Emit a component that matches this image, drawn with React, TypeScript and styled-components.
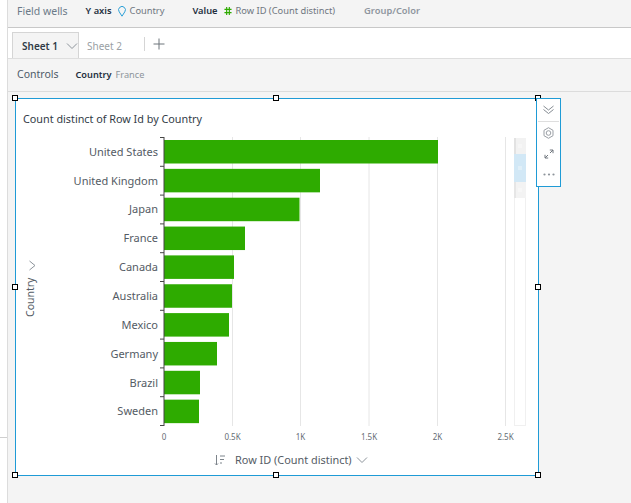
import styled, { createGlobalStyle } from "styled-components";

const Global = createGlobalStyle`
  html, body { margin: 0; padding: 0; background: #fff; }
  * { box-sizing: border-box; }
  body { font-family: "Noto Sans", "Open Sans", sans-serif; }
`;

const Page = styled.div`
  width: 631px;
  height: 503px;
  display: flex;
  overflow: hidden;
`;

const Gutter = styled.div`
  width: 8px;
  flex: none;
  border-right: 1px solid #dcdcdc;
`;

const GutterNotch = styled.div`
  height: 1px;
  margin-top: 437px;
  background: #cfcfcf;
`;

const Main = styled.div`
  flex: 1;
  min-width: 0;
  display: flex;
  flex-direction: column;
`;

const Wells = styled.div`
  height: 28px;
  flex: none;
  display: flex;
  align-items: flex-start;
  padding: 4px 0 0 9px;
  background: #f4f4f4;
  border-bottom: 1px solid #c8c8c8;
  font-size: 9.3px;
  line-height: 14px;
`;

const WellsTitle = styled.span`
  font-size: 10.5px;
  color: #6b7a88;
  margin-right: 18px;
`;

const WellLabel = styled.span`
  font-weight: 600;
  color: #232f3e;
  margin-right: 6px;
`;

const WellValue = styled.span<{ $after: number }>`
  display: inline-flex;
  align-items: center;
  gap: 4px;
  color: #6f7680;
  margin-right: ${({ $after }) => $after}px;
`;

const WellEmpty = styled.span`
  font-weight: 600;
  color: #8f969e;
`;

const Tabs = styled.div`
  height: 31px;
  flex: none;
  display: flex;
  align-items: flex-end;
  padding-left: 4px;
  background: #fff;
  border-bottom: 1px solid #dedede;
`;

const ActiveTab = styled.div`
  width: 67px;
  height: 26px;
  display: flex;
  align-items: center;
  justify-content: space-between;
  padding: 1px 0 0 9px;
  background: #f4f4f4;
  border: 1px solid #d5d5d5;
  border-bottom: none;
  font-size: 10px;
  font-weight: 600;
  color: #2f3a46;
`;

const Tab = styled.div`
  height: 26px;
  display: flex;
  align-items: center;
  padding: 1px 0 0 8px;
  width: 65px;
  font-size: 10px;
  color: #9a9fa5;
`;

const AddTab = styled.div`
  height: 14px;
  margin-bottom: 7px;
  padding-left: 8px;
  display: flex;
  align-items: center;
  border-left: 1px solid #d5d5d5;
`;

const Controls = styled.div`
  height: 33px;
  flex: none;
  display: flex;
  align-items: center;
  padding: 0 0 2px 9px;
  background: #f4f4f4;
  border-bottom: 1px solid #dcdcdc;
`;

const ControlsTitle = styled.span`
  font-size: 10.5px;
  color: #4d5a68;
  margin-right: 17px;
`;

const ControlName = styled.span`
  font-size: 9.2px;
  font-weight: 600;
  color: #232f3e;
  margin-right: 4px;
`;

const ControlValue = styled.span`
  font-size: 9.2px;
  color: #8d949b;
`;

const Canvas = styled.div`
  flex: 1;
  min-height: 0;
  background: #f4f4f4;
  padding: 6px 0 0 7px;
`;

const Visual = styled.div`
  position: relative;
  width: 524px;
  height: 378px;
  background: #fff;
  border: 1px solid #1f9bd6;
`;

const VisualTitle = styled.div`
  height: 31px;
  padding: 12px 0 0 7px;
  font-size: 10.8px;
  line-height: 15px;
  color: #333c47;
`;

const ChartSvg = styled.svg`
  display: block;
`;

const Handle = styled.span<{ $x: string; $y: string }>`
  position: absolute;
  left: ${({ $x }) => $x};
  top: ${({ $y }) => $y};
  width: 6px;
  height: 6px;
  margin: -3px 0 0 -3px;
  background: #fff;
  border: 1.5px solid #000;
`;

const VisualMenu = styled.div`
  position: absolute;
  left: 520px;
  top: -1px;
  width: 25px;
  height: 89px;
  display: flex;
  flex-direction: column;
  align-items: center;
  background: #fff;
  border: 1px solid #1f9bd6;
`;

const MenuCollapse = styled.div`
  width: 21px;
  height: 23px;
  flex: none;
  display: flex;
  align-items: center;
  justify-content: center;
  border-bottom: 1px solid #dedede;
`;

const MenuItem = styled.div`
  height: 21px;
  flex: none;
  display: flex;
  align-items: center;
  justify-content: center;
`;

const rows = [
  { name: "United States", end: 438 },
  { name: "United Kingdom", end: 320 },
  { name: "Japan", end: 299.5 },
  { name: "France", end: 245 },
  { name: "Canada", end: 234 },
  { name: "Australia", end: 232 },
  { name: "Mexico", end: 229 },
  { name: "Germany", end: 217 },
  { name: "Brazil", end: 200 },
  { name: "Sweden", end: 199 },
];

const ticks = [
  { label: "0", x: 164 },
  { label: "0.5K", x: 232.5 },
  { label: "1K", x: 300.5 },
  { label: "1.5K", x: 369 },
  { label: "2K", x: 437.5 },
  { label: "2.5K", x: 505.5 },
];

const STEP = 28.85;

const Chevron = ({ size = 12 }: { size?: number }) => (
  <svg width={size} height={size} viewBox="0 0 12 12" fill="none" stroke="#8d949b" strokeWidth="1">
    <path d="M1 3.5 6 8.5 11 3.5" />
  </svg>
);

const Chart = () => (
  <ChartSvg width={522} height={345} viewBox="16 130 522 345" fontFamily="'Noto Sans', 'Open Sans', sans-serif">
    {ticks.slice(1).map((t) => (
      <line key={t.label} x1={t.x} x2={t.x} y1={137} y2={426} stroke="#e6e6e6" strokeWidth="1" />
    ))}
    {rows.map((r, i) => (
      <g key={r.name}>
        <rect x={164} y={140 + i * STEP} width={r.end - 164} height={23.5} fill="#2eab00" />
        <text x={158} y={155.7 + i * STEP} textAnchor="end" fontSize="11" fill="#545b64">
          {r.name}
        </text>
      </g>
    ))}
    {rows.concat(rows[0]).map((r, i) => (
      <line key={i} x1={160} x2={164} y1={137.5 + i * 28.8} y2={137.5 + i * 28.8} stroke="#444" strokeWidth="1" />
    ))}
    <line x1={164} x2={164} y1={137} y2={426} stroke="#444" strokeWidth="1" />
    {ticks.map((t) => (
      <text key={t.label} x={t.x} y={440} textAnchor="middle" fontSize="8" fill="#666d75">
        {t.label}
      </text>
    ))}

    <rect x={514.5} y={138.5} width={11} height={287} fill="none" stroke="#f0f0f0" />
    <rect x={514} y={138} width={12} height={16} fill="#f2f2f2" />
    <rect x={514} y={138} width={2} height={16} fill="#e2e2e2" />
    <rect x={514} y={154} width={12} height={28} fill="#d2e8f6" />
    <rect x={514} y={182} width={12} height={16} fill="#f3f3f3" />
    <rect x={514} y={182} width={2} height={16} fill="#e6e6e6" />
    {[146, 168, 190].map((y) => (
      <path key={y} d={`M518 ${y - 1}h4M518 ${y + 1}h4`} stroke="#fff" strokeWidth="0.8" opacity="0.8" />
    ))}

    <text transform="translate(34 317) rotate(-90)" fontSize="10.5" fill="#545b64">
      Country
    </text>
    <path d="M29.5 261 35 265.5 29.5 270" fill="none" stroke="#8d949b" />

    <path d="M216.5 455v10M215 463.5l1.500 1.500 1.500-1.500M220 456h5M220 459.500h4M220 463h2" fill="none" stroke="#7d848b" strokeWidth="1" />
    <text x={235} y={464} fontSize="10.9" fill="#545b64">
      Row ID (Count distinct)
    </text>
    <path d="M357 457.500 362 462.500 367 457.500" fill="none" stroke="#8d949b" />
  </ChartSvg>
);

const handles = [
  ["-1px", "-1px"],
  ["260px", "-1px"],
  ["522px", "-1px"],
  ["-1px", "188px"],
  ["522px", "188px"],
  ["-1px", "376px"],
  ["260px", "376px"],
  ["522px", "376px"],
];

export default function App() {
  return (
    <Page>
      <Global />
      <Gutter>
        <GutterNotch />
      </Gutter>
      <Main>
        <Wells>
          <WellsTitle>Field wells</WellsTitle>
          <WellLabel>Y axis</WellLabel>
          <WellValue $after={28}>
            <svg width="8" height="11" viewBox="0 0 8 11" fill="none" stroke="#2a9fd6" strokeWidth="1">
              <path d="M4 10.200 1.200 5.800A3.400 3.400 0 1 1 6.800 5.800Z" />
            </svg>
            Country
          </WellValue>
          <WellLabel>Value</WellLabel>
          <WellValue $after={29}>
            <svg width="8" height="10" viewBox="0 0 9 10" stroke="#2eab00" strokeWidth="1.300">
              <path d="M3 .5v9M6 .5v9M.5 3.200h8M.5 6.800h8" />
            </svg>
            Row ID (Count distinct)
          </WellValue>
          <WellEmpty>Group/Color</WellEmpty>
        </Wells>
        <Tabs>
          <ActiveTab>
            Sheet 1
            <Chevron />
          </ActiveTab>
          <Tab>Sheet 2</Tab>
          <AddTab>
            <svg width="12" height="12" viewBox="0 0 12 12" stroke="#6d747b" strokeWidth="1">
              <path d="M6 .5v11M.5 6h11" />
            </svg>
          </AddTab>
        </Tabs>
        <Controls>
          <ControlsTitle>Controls</ControlsTitle>
          <ControlName>Country</ControlName>
          <ControlValue>France</ControlValue>
        </Controls>
        <Canvas>
          <Visual>
            <VisualTitle>Count distinct of Row Id by Country</VisualTitle>
            <Chart />
            {handles.map(([x, y]) => (
              <Handle key={x + y} $x={x} $y={y} />
            ))}
            <VisualMenu>
              <MenuCollapse>
                <svg width="11" height="10" viewBox="0 0 11 10" fill="none" stroke="#858c93" strokeWidth="1">
                  <path d="M.5 1 5.500 5 10.500 1M.5 4.500 5.500 8.500 10.500 4.500" />
                </svg>
              </MenuCollapse>
              <MenuItem>
                <svg width="11" height="12" viewBox="0 0 11 12" fill="none" stroke="#9a9fa5" strokeWidth="1">
                  <path d="M5.500 .7 10 3.300v5.400L5.500 11.300 1 8.700V3.300Z" />
                  <circle cx="5.500" cy="6" r="2.300" />
                </svg>
              </MenuItem>
              <MenuItem>
                <svg width="10" height="10" viewBox="0 0 10 10" fill="none" stroke="#70777e" strokeWidth="1">
                  <path d="M1 9 4 6M6 4 9 1M5.800 1H9v3.200M1 5.800V9h3.200" />
                </svg>
              </MenuItem>
              <MenuItem>
                <svg width="12" height="3" viewBox="0 0 12 3" fill="#8d949b">
                  <circle cx="1.500" cy="1.500" r="1.100" />
                  <circle cx="6" cy="1.500" r="1.100" />
                  <circle cx="10.500" cy="1.500" r="1.100" />
                </svg>
              </MenuItem>
            </VisualMenu>
          </Visual>
        </Canvas>
      </Main>
    </Page>
  );
}
